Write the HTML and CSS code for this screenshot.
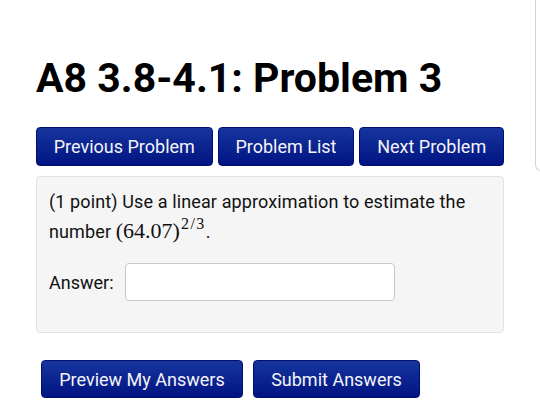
FILE: index.html
```html
<!DOCTYPE html>
<html lang="en">
<head>
    <meta charset="UTF-8">
    <meta name="viewport" content="width=device-width, initial-scale=1.0">
    <title>A8 3.8-4.1: Problem 3</title>
    <link rel="stylesheet" href="styles.css">
</head>
<body>

    <div class="side-frame"></div>

    <div class="page">
        <h1>A8 3.8-4.1: Problem 3</h1>

        <div class="nav-buttons">
            <button class="btn">Previous Problem</button>
            <button class="btn">Problem List</button>
            <button class="btn">Next Problem</button>
        </div>

        <div class="problem">
            <p class="problem-text">(1 point) Use a linear approximation to estimate the number <span class="math">(64.07)<sup>2/3</sup></span>.</p>
            <div class="answer-row">
                <label for="answer">Answer:</label>
                <input type="text" id="answer" class="answer-input">
            </div>
        </div>

        <div class="submit-buttons">
            <button class="btn">Preview My Answers</button>
            <button class="btn">Submit Answers</button>
        </div>
    </div>

</body>
</html>
```

FILE: styles.css
```css
/* Reset */
* {
    margin: 0;
    padding: 0;
    box-sizing: border-box;
}

body {
    font-family: Roboto, 'Liberation Sans', sans-serif;
    color: #111;
    background: #fff;
    position: relative;
    overflow: hidden;
    height: 409px;
}

/* Borda do painel lateral (fora da tela) */
.side-frame {
    position: absolute;
    top: -10px;
    left: 535px;
    width: 20px;
    height: 181px;
    border-left: 1px solid #d4d4d4;
    border-bottom: 1px solid #d4d4d4;
    border-bottom-left-radius: 6px;
}

.page {
    padding-left: 36px;
    width: 504px;
}

h1 {
    font-size: 41px;
    line-height: 48px;
    font-weight: 700;
    color: #000;
    margin-top: 54px;
    margin-bottom: 25px;
}

/* Botões */
.btn {
    font-family: Roboto, 'Liberation Sans', sans-serif;
    font-size: 18px;
    line-height: 21px;
    color: #f4f4f8;
    padding: 8px 16px;
    border: 1px solid #001070;
    border-radius: 4px;
    background: linear-gradient(to bottom, #17359e, #001482);
    cursor: pointer;
}

.nav-buttons {
    display: flex;
    gap: 5px;
    margin-bottom: 10px;
}

.nav-buttons .btn:nth-child(1) {
    width: 177px;
}

.nav-buttons .btn:nth-child(2) {
    width: 137px;
}

.nav-buttons .btn:nth-child(3) {
    width: 145px;
}

/* Problema */
.problem {
    background-color: #f5f5f5;
    border: 1px solid #e3e3e3;
    border-radius: 4px;
    padding: 10px 12px 31px;
    width: 468px;
}

.problem-text {
    font-size: 18px;
    line-height: 29px;
    letter-spacing: 0.12px;
}

.math {
    font-family: 'Liberation Serif', 'Times New Roman', serif;
    font-size: 22px;
    letter-spacing: 0;
}

.math sup {
    font-size: 16px;
    line-height: 0;
    letter-spacing: 1.5px;
    margin-left: 1px;
    vertical-align: 9px;
}

.answer-row {
    display: flex;
    align-items: center;
    gap: 11px;
    margin-top: 17px;
}

.answer-row label {
    font-size: 18px;
    line-height: 21px;
}

.answer-input {
    width: 270px;
    height: 38px;
    border: 1px solid #c8c8c8;
    border-radius: 4px;
    background: #fff;
    font-size: 18px;
    padding: 4px 8px;
}

.submit-buttons {
    display: flex;
    gap: 10px;
    margin-top: 27px;
    margin-left: 5px;
}

.submit-buttons .btn {
    height: 38px;
    padding: 0 16px;
}

.submit-buttons .btn:nth-child(1) {
    width: 202px;
}

.submit-buttons .btn:nth-child(2) {
    width: 167px;
}
```
